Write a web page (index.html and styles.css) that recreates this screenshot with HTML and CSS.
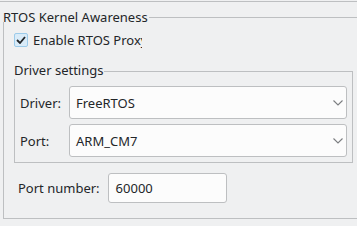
FILE: index.html
```html
<!DOCTYPE html>
<html>
<head>
<meta charset="utf-8">
<link rel="stylesheet" href="styles.css">
</head>
<body>
<div class="topline"></div>
<section class="group outer">
  <div class="group-head">
    <span class="group-title">RTOS Kernel Awareness</span>
    <span class="group-line outer-line"></span>
  </div>
  <div class="outer-body">
    <label class="check-row">
      <span class="checkbox">
        <svg width="10" height="8" viewBox="0 0 10 8"><polyline points="1,4 4,7 9,1" fill="none" stroke="#232629" stroke-width="1.8"/></svg>
      </span>
      <span class="check-label">Enable RTOS Proxy</span>
    </label>
    <section class="group inner">
      <div class="group-head">
        <span class="group-title">Driver settings</span>
        <span class="group-line inner-line"></span>
      </div>
      <div class="inner-body">
        <div class="form-grid">
          <span class="field-label">Driver:</span>
          <div class="combo">
            <span class="combo-text">FreeRTOS</span>
            <svg class="chev" width="10" height="6" viewBox="0 0 10 6"><polyline points="0.5,0.5 5,5 9.5,0.5" fill="none" stroke="#7b7d80" stroke-width="1.1"/></svg>
          </div>
          <span class="field-label">Port:</span>
          <div class="combo">
            <span class="combo-text">ARM_CM7</span>
            <svg class="chev" width="10" height="6" viewBox="0 0 10 6"><polyline points="0.5,0.5 5,5 9.5,0.5" fill="none" stroke="#7b7d80" stroke-width="1.1"/></svg>
          </div>
        </div>
      </div>
    </section>
    <div class="port-row">
      <span class="field-label">Port number:</span>
      <div class="text-input">60000</div>
    </div>
  </div>
</section>
</body>
</html>
```

FILE: styles.css
```css
html, body {
  margin: 0;
  padding: 0;
}
body {
  width: 357px;
  height: 226px;
  overflow: hidden;
  background: #eff0f1;
  color: #232629;
  font-family: "Noto Sans", "DejaVu Sans", sans-serif;
  font-size: 13px;
  line-height: 18px;
}
.topline {
  margin-top: 1px;
  height: 1px;
  background: #bdbfc1;
}
.outer {
  margin: 6px 0 0 3px;
}
.group-head {
  display: flex;
  height: 18px;
}
.group-title {
  white-space: nowrap;
}
.group-line {
  flex: 1;
  margin-left: 1px;
}
.outer-line {
  margin-top: 9px;
  height: 1px;
  background: #bdbfc1;
}
.outer-body {
  margin-top: -4px;
  border-left: 1px solid #bdbfc1;
  border-bottom: 1px solid #bdbfc1;
  padding: 9px 0 15px 10px;
}
.check-row {
  display: flex;
  align-items: center;
  height: 18px;
  gap: 5px;
}
.checkbox {
  box-sizing: border-box;
  width: 14px;
  height: 14px;
  border: 1px solid #9ccbea;
  border-radius: 2px;
  background: #d9ebf8;
  display: flex;
  align-items: center;
  justify-content: center;
}
.check-label {
  width: 109px;
  overflow: hidden;
  white-space: nowrap;
}
.inner {
  margin: 12px 4px 0 0;
}
.inner-line {
  margin-top: 10px;
  border-top: 1px solid #bdbfc1;
  border-right: 1px solid #bdbfc1;
}
.inner-body {
  border-left: 1px solid #bdbfc1;
  border-right: 1px solid #bdbfc1;
  border-bottom: 1px solid #bdbfc1;
  padding: 7px 5px 5px 5px;
}
.form-grid {
  display: grid;
  grid-template-columns: auto 1fr;
  column-gap: 8px;
  row-gap: 5px;
  align-items: center;
}
.field-label {
  white-space: nowrap;
}
.combo {
  box-sizing: border-box;
  height: 33px;
  border: 1px solid #bdbfc1;
  border-radius: 3px;
  background: #fcfcfc;
  display: flex;
  align-items: center;
  padding: 0 3px 0 6px;
}
.combo-text {
  flex: 1;
}
.port-row {
  margin-top: 10px;
  padding-left: 4px;
  display: flex;
  align-items: center;
  gap: 8px;
}
.text-input {
  box-sizing: border-box;
  width: 119px;
  height: 30px;
  border: 1px solid #bdbfc1;
  border-radius: 3px;
  background: #fcfcfc;
  padding: 0 7px;
  display: flex;
  align-items: center;
}
```
